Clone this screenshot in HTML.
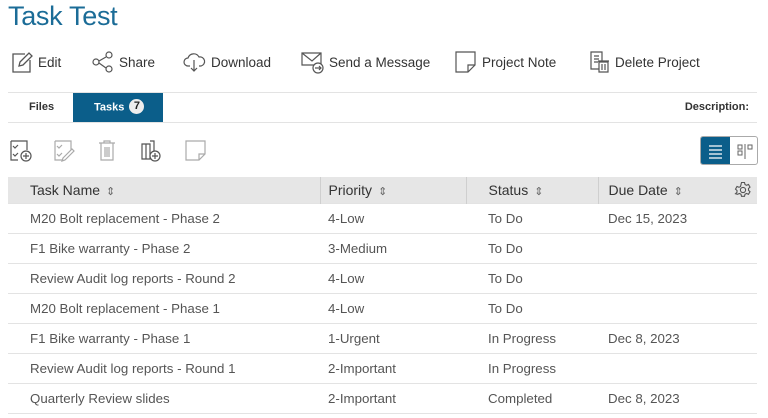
<!DOCTYPE html><html><head><style>
*{margin:0;padding:0;box-sizing:border-box}
body{width:768px;height:418px;background:#fff;font-family:"Liberation Sans",sans-serif;color:#333;position:relative;overflow:hidden}
.a{position:absolute}
h1{position:absolute;left:8px;top:1px;font-weight:normal;font-size:27px;color:#1b6c97;letter-spacing:-0.3px}
.tb{font-size:13.5px;color:#333;top:54px}
.tb svg{position:absolute;left:0;top:-3px}
.tb span{position:absolute;white-space:nowrap;top:1px}
table{position:absolute;left:8px;top:177px;width:749px;border-collapse:collapse;font-size:13.3px;color:#555}
th{background:#e6e6e6;height:26px;text-align:left;font-weight:normal;color:#333;font-size:14px;border-left:1px solid #cfcfcf}
th:first-child{border-left:none}
td{height:30px;border-top:1px solid #e3e3e3}
tr:last-child td{border-bottom:1px solid #e3e3e3}
.s{font-size:11px;color:#666;margin-left:6px}
</style></head><body>
<h1>Task Test</h1>
<div class="a tb" style="left:11px"><svg width="22" height="22" viewBox="0 0 22 22" fill="none" stroke="#555" stroke-width="1.3"><path d="M14 3H2v18h17V9"/><path d="M8 15l1-4 9-9 3 3-9 9z"/></svg><span style="left:27px">Edit</span></div>
<div class="a tb" style="left:92px"><svg width="24" height="22" viewBox="0 0 24 22" fill="none" stroke="#555" stroke-width="1.2"><circle cx="4" cy="11" r="3"/><circle cx="17" cy="4" r="3"/><circle cx="17" cy="18" r="3"/><path d="M7 10l7-4M7 12l7 5"/></svg><span style="left:27px">Share</span></div>
<div class="a tb" style="left:183px"><svg width="24" height="22" viewBox="0 0 24 22" fill="none" stroke="#555" stroke-width="1.2"><path d="M7 15H5a4 4 0 010-8 6 6 0 0111-1 4 4 0 012 9h-2"/><path d="M11 9v11M8 17l3 3 3-3"/></svg><span style="left:28px">Download</span></div>
<div class="a tb" style="left:301px"><svg width="26" height="24" viewBox="0 0 26 24" fill="none" stroke="#555" stroke-width="1.2"><path d="M1 2h19v12H1zM1 2l10 8 9-8"/><circle cx="17" cy="17" r="5" fill="#fff"/><path d="M14 17h6M18 15l2 2-2 2"/></svg><span style="left:28px">Send a Message</span></div>
<div class="a tb" style="left:455px"><svg width="22" height="22" viewBox="0 0 22 22" fill="none" stroke="#555" stroke-width="1.2"><path d="M1 1h19v13l-7 7H1z"/><path d="M20 14h-7v7"/></svg><span style="left:27px">Project Note</span></div>
<div class="a tb" style="left:589px"><svg width="22" height="22" viewBox="0 0 22 22" fill="none" stroke="#555" stroke-width="1.2"><path d="M2 1h11v17H2zM5 5h5M5 8h5M5 11h4"/><path d="M10 11h9v10h-9zM9 10h11M13 13v6M16 13v6" fill="#fff"/></svg><span style="left:26px">Delete Project</span></div>
<div class="a" style="left:8px;top:92px;width:749px;border-top:1px solid #e3e3e3"></div>
<div class="a" style="left:8px;top:122px;width:749px;border-top:1px solid #e3e3e3"></div>
<div class="a" style="left:29px;top:101px;font-size:11px;font-weight:bold;color:#333">Files</div>
<div class="a" style="left:73px;top:93px;width:90px;height:29px;background:#0b5e8a;color:#fff;font-size:11px;font-weight:bold;padding:8px 0 0 21px">Tasks <span style="display:inline-block;width:15px;height:15px;border-radius:50%;background:#eee;color:#222;text-align:center;line-height:15px;margin-left:2px;margin-top:-2px;vertical-align:middle">7</span></div>
<div class="a" style="right:19px;top:101px;font-size:11px;font-weight:bold;color:#333">Description:</div>
<svg class="a" style="left:9px;top:139px" width="200" height="24" fill="none" stroke-width="1.2">
<g stroke="#555"><path d="M2 2h16v9M9 21H2V2"/><path d="M4 7l2 2 3-3M4 15l2 2 3-3"/><circle cx="17" cy="17" r="5" fill="#fff"/><path d="M17 14v6M14 17h6"/></g>
<g stroke="#aaa" transform="translate(44 0)"><path d="M2 2h16v9M9 21H2V2M4 7l2 2 3-3M4 15l2 2 3-3M10 19l9-9 2 2-9 9-3 1z"/></g>
<g stroke="#aaa" transform="translate(88 0)"><path d="M2 4h16M7 4V2h6v2M4 4v17h12V4M8 8v10M10 8v10M12 8v10"/></g>
<g stroke="#555" transform="translate(132 0)"><path d="M1 5h4v15H1zM5 5h4v15H5zM9 2h4v11"/><circle cx="14" cy="17" r="5" fill="#fff"/><path d="M14 14v6M11 17h6"/></g>
<g stroke="#aaa" transform="translate(176 0)"><path d="M1 2h19v13l-6 6H1zM20 15h-6v6"/></g>
</svg>
<div class="a" style="left:700px;top:136px;width:58px;height:29px;border:1px solid #aaa;border-radius:3px;overflow:hidden">
<div class="a" style="left:0;top:0;width:29px;height:29px;background:#0b5e8a"><svg width="29" height="29" stroke="#fff" stroke-width="1.2"><path d="M8 9h13M8 13h13M8 17h13M8 21h13"/></svg></div>
<svg class="a" style="left:30px;top:0" width="28" height="29" fill="none" stroke="#666" stroke-width="1"><path d="M7 8h4v4H7zM7 14h4v4H7zM14 7v15M17 8h4v4h-4z"/></svg></div>
<table>
<tr><th style="padding-left:22px;width:312px">Task Name<span class="s">&#8661;</span></th><th style="padding-left:8px;width:146px">Priority<span class="s">&#8661;</span></th><th style="padding-left:22px;width:132px">Status<span class="s">&#8661;</span></th><th style="padding-left:10px;position:relative">Due Date<span class="s">&#8661;</span><svg style="position:absolute;right:5px;top:4px" width="18" height="18" viewBox="0 0 18 18" fill="none" stroke="#555" stroke-width="1.1"><path d="M7.5 1.5h3l.5 2 1.5.8 2-.8 1.5 2.6-1.5 1.4v1.8l1.5 1.4-1.5 2.6-2-.8-1.5.8-.5 2h-3l-.5-2-1.5-.8-2 .8L1.5 12.7 3 11.3V9.5L1.5 8.1 3 5.5l2 .8 1.5-.8z"/><circle cx="9" cy="9" r="2.6"/></svg></th></tr>
<tr><td style="padding-left:22px">M20 Bolt replacement - Phase 2</td><td style="padding-left:8px">4-Low</td><td style="padding-left:22px">To Do</td><td style="padding-left:10px">Dec 15, 2023</td></tr>
<tr><td style="padding-left:22px">F1 Bike warranty - Phase 2</td><td style="padding-left:8px">3-Medium</td><td style="padding-left:22px">To Do</td><td></td></tr>
<tr><td style="padding-left:22px">Review Audit log reports - Round 2</td><td style="padding-left:8px">4-Low</td><td style="padding-left:22px">To Do</td><td></td></tr>
<tr><td style="padding-left:22px">M20 Bolt replacement - Phase 1</td><td style="padding-left:8px">4-Low</td><td style="padding-left:22px">To Do</td><td></td></tr>
<tr><td style="padding-left:22px">F1 Bike warranty - Phase 1</td><td style="padding-left:8px">1-Urgent</td><td style="padding-left:22px">In Progress</td><td style="padding-left:10px">Dec 8, 2023</td></tr>
<tr><td style="padding-left:22px">Review Audit log reports - Round 1</td><td style="padding-left:8px">2-Important</td><td style="padding-left:22px">In Progress</td><td></td></tr>
<tr><td style="padding-left:22px">Quarterly Review slides</td><td style="padding-left:8px">2-Important</td><td style="padding-left:22px">Completed</td><td style="padding-left:10px">Dec 8, 2023</td></tr>
</table>
</body></html>
